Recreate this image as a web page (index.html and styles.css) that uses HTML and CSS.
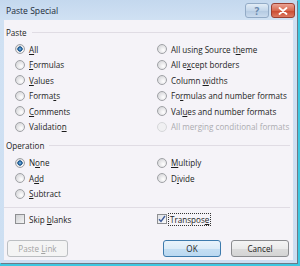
FILE: index.html
```html
<!DOCTYPE html>
<html>
<head>
<meta charset="utf-8">
<link rel="stylesheet" href="styles.css">
</head>
<body>
<div class="window">
  <div class="titlebar">
    <span class="title">Paste Special</span>
    <div class="tbtns">
      <span class="tb help">?</span>
      <span class="tb close"><svg width="10" height="8" viewBox="0 0 10 8"><path d="M1.5 1 L8.5 7 M8.5 1 L1.5 7" stroke="#fff" stroke-width="1.8" stroke-linecap="round"/></svg></span>
    </div>
  </div>
  <div class="content">
    <div class="group-head"><span>Paste</span><i class="rule"></i></div>
    <div class="opts">
      <div class="opt"><span class="radio on"></span><span><u>A</u>ll</span></div>
      <div class="opt"><span class="radio"></span><span>All using Source t<u>h</u>eme</span></div>
      <div class="opt"><span class="radio"></span><span><u>F</u>ormulas</span></div>
      <div class="opt"><span class="radio"></span><span>All e<u>x</u>cept borders</span></div>
      <div class="opt"><span class="radio"></span><span><u>V</u>alues</span></div>
      <div class="opt"><span class="radio"></span><span>Column <u>w</u>idths</span></div>
      <div class="opt"><span class="radio"></span><span>Forma<u>t</u>s</span></div>
      <div class="opt"><span class="radio"></span><span>Fo<u>r</u>mulas and number formats</span></div>
      <div class="opt"><span class="radio"></span><span><u>C</u>omments</span></div>
      <div class="opt"><span class="radio"></span><span>Val<u>u</u>es and number formats</span></div>
      <div class="opt"><span class="radio"></span><span>Validatio<u>n</u></span></div>
      <div class="opt disabled"><span class="radio"></span><span>All mer<u>g</u>ing conditional formats</span></div>
    </div>
    <div class="group-head op-head"><span>Operation</span><i class="rule"></i></div>
    <div class="opts">
      <div class="opt"><span class="radio on"></span><span>N<u>o</u>ne</span></div>
      <div class="opt"><span class="radio"></span><span><u>M</u>ultiply</span></div>
      <div class="opt"><span class="radio"></span><span>A<u>d</u>d</span></div>
      <div class="opt"><span class="radio"></span><span>D<u>i</u>vide</span></div>
      <div class="opt"><span class="radio"></span><span><u>S</u>ubtract</span></div>
    </div>
    <div class="separator"></div>
    <div class="opts checks">
      <div class="opt"><span class="check"></span><span>Skip <u>b</u>lanks</span></div>
      <div class="opt"><span class="check on"><svg width="8" height="8" viewBox="0 0 8 8"><path d="M1 4.2 L3 6.5 L7 1" fill="none" stroke="#3d5a9a" stroke-width="1.4"/></svg></span><span class="focus">Transpos<u>e</u></span></div>
    </div>
    <div class="buttons">
      <span class="btn disabled"><span>Paste <u>L</u>ink</span></span>
      <span class="btn default">OK</span>
      <span class="btn">Cancel</span>
    </div>
  </div>
</div>
</body>
</html>
```

FILE: styles.css
```css
* { box-sizing: border-box; }

body {
  margin: 0;
  width: 300px;
  height: 266px;
  overflow: hidden;
  background: #3dc8e1;
  font-family: "Open Sans", "Noto Sans", sans-serif;
  font-size: 8.1px;
  color: #1c1c1c;
}

.window {
  width: 297px;
  height: 263px;
  background: linear-gradient(#c4d8ee, #d0e1f3 20px, #cddff2);
  padding: 0 4px 3px 4px;
  display: flex;
  flex-direction: column;
  box-shadow: 1px 1px 0 #6b7a88;
}

.titlebar {
  height: 20px;
  flex: none;
  display: flex;
  align-items: center;
  padding-left: 2px;
  margin-right: -2px;
}

.title {
  font-size: 8.6px;
  color: #1b2a3a;
  padding-top: 2px;
}

.tbtns {
  margin-left: auto;
  align-self: flex-start;
  margin-top: 3px;
  display: flex;
  gap: 2px;
}

.tb {
  width: 24px;
  height: 15px;
  border-radius: 3px;
  display: flex;
  align-items: center;
  justify-content: center;
}

.help {
  background: linear-gradient(#e2ecf6, #c3d6ea 50%, #b3c9e1 51%, #cadbee);
  border: 1px solid #93abc6;
  color: #6a88ad;
  font-size: 10px;
  font-weight: bold;
  line-height: 1;
}

.close {
  background: linear-gradient(#eaa395, #d8694f 50%, #c9482f 51%, #dc7a62);
  border: 1px solid #9a4032;
}

.content {
  flex: 1;
  background: #f5f3f8;
  padding: 6px 0 3px 2px;
  display: flex;
  flex-direction: column;
}

.group-head {
  height: 12px;
  display: flex;
  align-items: center;
  gap: 5px;
  margin-right: 3px;
}

.rule {
  flex: 1;
  height: 1px;
  background: #e0dce4;
}

.op-head {
  margin-top: 5.5px;
}

.opts {
  display: grid;
  grid-template-columns: 142px auto;
  grid-auto-rows: 15.5px;
  padding-left: 9px;
  margin-top: 3.25px;
}

.opt {
  display: flex;
  align-items: center;
  gap: 4px;
  white-space: nowrap;
}

.opt u { text-decoration-thickness: 1px; text-underline-offset: 1px; }

.radio {
  width: 10px;
  height: 10px;
  flex: none;
  border-radius: 50%;
  border: 1px solid #a0a2a6;
  background: radial-gradient(circle at 65% 65%, #ffffff, #e8e8ea 45%, #cdced1);
}

.radio.on {
  background:
    radial-gradient(circle at 50% 50%, #8cc4ea 0, #2b6ba6 1.6px, #1a4f80 2.4px, transparent 2.9px),
    radial-gradient(circle at 65% 65%, #ffffff, #e8e8ea 45%, #cdced1);
}

.disabled { color: #acacb0; }

.opt.disabled .radio {
  border-color: #d6d7da;
  background: #f0f0f2;
}

.separator {
  height: 1px;
  background: #e0dce4;
  margin: 5.25px 3px 0 -2px;
}

.checks {
  margin-top: 3.85px;
}

.check {
  width: 10px;
  height: 10px;
  flex: none;
  border: 1px solid #8e8f92;
  background: linear-gradient(135deg, #cfd0d3, #f4f4f5);
  display: flex;
  align-items: center;
  justify-content: center;
}

.check.on {
  background: linear-gradient(135deg, #dfe1e6, #fbfbfc);
}

.focus {
  outline: 1px dotted #333;
  outline-offset: 0;
  padding: 0 1px;
  margin-left: -2px;
}

.buttons {
  margin-top: auto;
  display: flex;
  gap: 10px;
  padding-right: 4px;
}

.btn {
  width: 58px;
  height: 17px;
  border-radius: 3px;
  border: 1px solid #8b8c8f;
  background: linear-gradient(#f4f4f4, #ebebeb 50%, #dcdcdc 51%, #d4d4d4);
  display: flex;
  align-items: center;
  justify-content: center;
  white-space: nowrap;
}

.btn.disabled {
  width: 61px;
  margin-left: 1px;
  margin-right: auto;
  border-color: #bcbfc2;
  background: #f4f4f4;
  color: #a3a3a3;
}

.btn.default {
  border-color: #3d7bad;
  background: linear-gradient(#e9f3fb, #dcecf8 50%, #c4dff3 51%, #b9d8f1);
}
```
